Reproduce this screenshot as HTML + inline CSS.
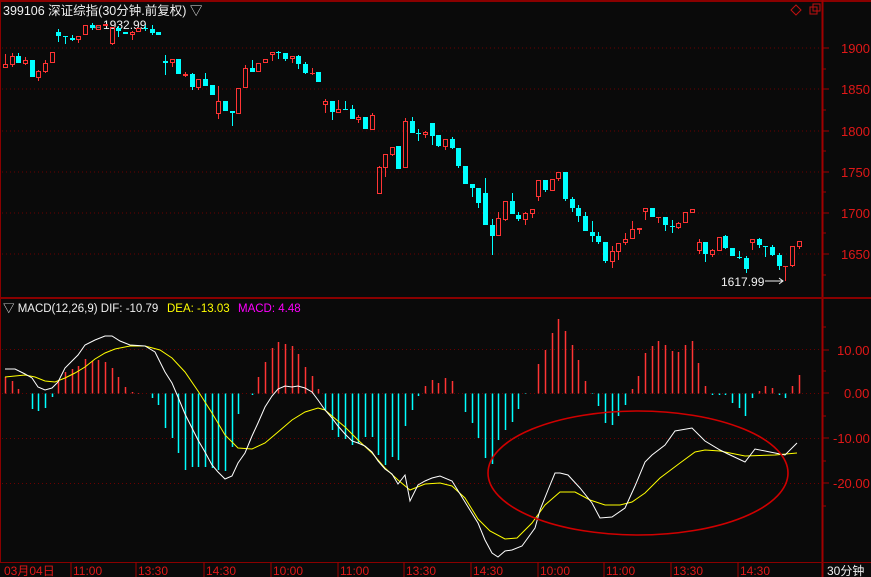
<!DOCTYPE html>
<html><head><meta charset="utf-8"><style>
html,body{margin:0;padding:0;background:#0a0a0a;width:871px;height:577px;overflow:hidden}
svg{display:block}
text{font-family:"Liberation Sans","Noto Sans CJK SC",sans-serif}
</style></head><body>
<svg id="s" width="871" height="577" viewBox="0 0 871 577" xmlns="http://www.w3.org/2000/svg">
<rect width="871" height="577" fill="#0a0a0a"/>
<line x1="0" y1="1" x2="871" y2="1" stroke="#8a0000" stroke-width="2"/>
<line x1="0.5" y1="0" x2="0.5" y2="562" stroke="#8a0000"/>
<line x1="822.5" y1="0" x2="822.5" y2="577" stroke="#a00000" stroke-width="2"/>
<line x1="0" y1="298" x2="871" y2="298" stroke="#8a0000" stroke-width="2"/>
<line x1="0" y1="562.5" x2="871" y2="562.5" stroke="#8a0000"/>
<g stroke="#6a0000" stroke-dasharray="1,3">
<line x1="2" y1="48" x2="822" y2="48"/><line x1="2" y1="89" x2="822" y2="89"/><line x1="2" y1="131" x2="822" y2="131"/><line x1="2" y1="172" x2="822" y2="172"/><line x1="2" y1="213" x2="822" y2="213"/><line x1="2" y1="254" x2="822" y2="254"/>
<line x1="2" y1="349.5" x2="822" y2="349.5"/><line x1="2" y1="393.5" x2="822" y2="393.5"/><line x1="2" y1="438.5" x2="822" y2="438.5"/><line x1="2" y1="483.5" x2="822" y2="483.5"/>
</g>
<g stroke="#a00000">
<line x1="822" y1="48" x2="829" y2="48"/><line x1="822" y1="89" x2="829" y2="89"/><line x1="822" y1="131" x2="829" y2="131"/><line x1="822" y1="172" x2="829" y2="172"/><line x1="822" y1="213" x2="829" y2="213"/><line x1="822" y1="254" x2="829" y2="254"/>
<line x1="822" y1="69" x2="826" y2="69"/><line x1="822" y1="110" x2="826" y2="110"/><line x1="822" y1="151" x2="826" y2="151"/><line x1="822" y1="192" x2="826" y2="192"/><line x1="822" y1="233" x2="826" y2="233"/><line x1="822" y1="275" x2="826" y2="275"/>
<line x1="822" y1="350" x2="829" y2="350"/><line x1="822" y1="393" x2="829" y2="393"/><line x1="822" y1="438" x2="829" y2="438"/><line x1="822" y1="483" x2="829" y2="483"/>
<line x1="822" y1="371" x2="826" y2="371"/><line x1="822" y1="416" x2="826" y2="416"/><line x1="822" y1="461" x2="826" y2="461"/><line x1="822" y1="506" x2="826" y2="506"/><line x1="822" y1="327" x2="826" y2="327"/>
</g>
<g fill="#e01818" font-size="13">
<text x="841" y="53">1900</text><text x="841" y="94">1850</text><text x="841" y="136">1800</text><text x="841" y="177">1750</text><text x="841" y="218">1700</text><text x="841" y="259">1650</text>
<text x="837" y="355">10.00</text><text x="844" y="398">0.00</text><text x="833" y="443">-10.00</text><text x="833" y="488">-20.00</text>
</g>
<g fill="none" stroke="#c01010">
<path d="M796 5 L801 10 L796 15 L791 10 Z"/>
<rect x="810" y="7" width="7" height="7"/><rect x="813" y="4" width="7" height="7"/>
</g>
<text x="3" y="15" fill="#f0f0f0" font-size="12.5">399106 深证综指(30分钟.前复权) ▽</text>
<text x="3" y="312" fill="#f0f0f0" font-size="11.5">▽ MACD(12,26,9)  DIF: -10.79</text>
<text x="167" y="312" fill="#ffff00" font-size="11.5">DEA: -13.03</text>
<text x="238" y="312" fill="#ff00ff" font-size="11.5">MACD: 4.48</text>
<text x="91" y="29" fill="#f0f0f0" font-size="12">←1932.99</text>
<text x="721" y="286" fill="#f0f0f0" font-size="12">1617.99</text>
<path d="M765 281 H783 M779 278 L783 281 L779 284" stroke="#f0f0f0" fill="none"/>
<g id="cand"></g>
<g id="hist"></g>
<g id="lines"></g>
<ellipse cx="638" cy="473" rx="150" ry="62" fill="none" stroke="#d00000" stroke-width="1.6"/>
<g stroke="#a00000">
<line x1="71" y1="562" x2="71" y2="577"/><line x1="136" y1="562" x2="136" y2="577"/><line x1="204" y1="562" x2="204" y2="577"/><line x1="271" y1="562" x2="271" y2="577"/><line x1="338" y1="562" x2="338" y2="577"/><line x1="404" y1="562" x2="404" y2="577"/><line x1="471" y1="562" x2="471" y2="577"/><line x1="538" y1="562" x2="538" y2="577"/><line x1="604" y1="562" x2="604" y2="577"/><line x1="671" y1="562" x2="671" y2="577"/><line x1="738" y1="562" x2="738" y2="577"/>
</g>
<g fill="#e01818" font-size="12">
<text x="4" y="575">03月04日</text><text x="73" y="575">11:00</text><text x="138" y="575">13:30</text><text x="206" y="575">14:30</text><text x="273" y="575">10:00</text><text x="340" y="575">11:00</text><text x="406" y="575">13:30</text><text x="473" y="575">14:30</text><text x="540" y="575">10:00</text><text x="606" y="575">11:00</text><text x="673" y="575">13:30</text><text x="740" y="575">14:30</text>
</g>
<text x="827" y="575" fill="#f0f0f0" font-size="12">30分钟</text>
</svg>
<script>
var NS="http://www.w3.org/2000/svg";
function el(p,t,a){var e=document.createElementNS(NS,t);for(var k in a)e.setAttribute(k,a[k]);p.appendChild(e);return e;}
var C=[
"r 5 64 68 54 68","r 12 56 65 53 67","c 18 56 63 53 63","r 25 60 64 57 65","c 32 60 77","r 38 71 78 70 81","r 45 63 72 60 73","r 52 52 63",
"c 58 32 36 29 42","c 65 36 37 36 44","c 72 38 40 35 41","r 78 36 40 36 43","r 85 25 35","c 92 25 28 23 30","r 98 25 30","r 105 24 26","r 112 27 44 27 45","c 118 28 31 26 37","c 125 32 34","r 132 32 35 31 40","r 138 28 32","c 145 28 29 25 31","c 152 29 33 25 35","c 158 32 35",
"c 165 61 63 55 75","r 172 59 63 59 67","c 178 59 74","r 185 74 76 72 77","c 192 74 87 73 90","r 198 79 88 79 90","c 205 79 86 73 86","c 212 85 95","r 218 101 114 86 119","c 225 101 111","c 232 111 113 111 126","r 238 88 114","r 245 68 88 65 88","c 252 68 72 60 72","r 258 63 72","r 265 59 63","r 272 52 55 52 61","c 278 52 53 51 59","c 285 53 59 53 61","r 292 56 59 56 63","c 298 56 64 55 69","c 305 64 73 62 74","r 312 73 74 68 75","c 318 72 82",
"r 325 101 105 99 113","c 332 101 112 101 120","r 338 109 113 100 113","c 345 109 110 101 110","c 352 109 119 105 119","r 358 117 120 115 123","c 365 117 129","r 372 115 130 113 130",
"r 379 167 194 166 194","r 385 154 168 154 177","r 392 147 155 147 156","c 398 146 169","r 405 121 168 118 168","c 412 121 133 117 133","c 418 133 134 129 141","r 425 132 135 131 138","c 432 123 136 123 145","c 438 135 146 135 147","r 445 139 147 139 150","c 452 139 148 137 149","c 458 148 166 148 168","c 465 166 184","c 472 184 188 184 197","c 478 188 203 188 208","c 485 193 225 178 225","c 492 225 236 219 255","r 498 218 236 212 236","r 505 201 220 201 221","c 512 201 214 193 214","c 518 215 219 212 221","r 525 213 220 212 225","r 532 209 214 209 218","r 538 180 197 180 201","c 545 180 190 180 192","r 552 179 191","r 558 172 179 172 181","c 565 172 199 172 201","c 572 199 208 197 212","c 578 208 216 205 222","c 585 216 231 212 231","c 592 232 236 221 242","c 598 236 242 232 244","c 605 242 261 242 263","r 612 251 262 246 268","r 618 243 252 243 260","r 625 239 243 233 245","r 632 229 239 221 239","r 639 228 230 228 234","r 645 208 212 208 220","c 652 208 217","r 658 217 218 217 223","c 665 217 225 217 231","c 672 226 227 220 233","r 678 223 228 222 229","r 685 212 223 212 223","r 692 209 213","r 699 242 251 239 254","c 705 242 254 242 262","r 712 250 255 249 257","r 719 237 251","c 725 236 248 235 249","c 732 248 256","c 739 257 258 251 259","c 746 258 269 256 273","r 752 239 243 239 250","c 759 239 245 238 248","c 765 246 247 246 257","c 772 247 255 245 256","c 779 255 266 253 270","r 785 266 267 266 281","r 792 246 266 246 267","r 799 241 247 241 249"];
var g=document.getElementById("cand");
C.forEach(function(s){var p=s.split(" "),red=p[0]=="r",x=+p[1],bt=+p[2],bb=+p[3],wt=p[4]?+p[4]:bt,wb=p[5]?+p[5]:bb;
var col=red?"#ff3434":"#00ffff";
if(wt<bt)el(g,"line",{x1:x+.5,y1:wt,x2:x+.5,y2:bt,stroke:col});
if(wb>bb)el(g,"line",{x1:x+.5,y1:bb,x2:x+.5,y2:wb,stroke:col});
if(bb-bt<=1.5){el(g,"line",{x1:x-2,y1:bt+.5,x2:x+3,y2:bt+.5,stroke:col});}
else if(red)el(g,"rect",{x:x-1.5,y:bt+.5,width:4,height:bb-bt-1,fill:"none",stroke:col});
else el(g,"rect",{x:x-2,y:bt,width:5,height:bb-bt,fill:col});
});
var H=[[5,377],[12,381],[18,389],[32,409],[38,411],[45,408],[52,397],[58,380],[65,372],[72,369],[78,366],[85,359],[92,361],[98,360],[105,362],[112,368],[118,377],[125,387],[132,392],[138,393],[152,398],[158,405],[165,428],[172,438],[178,453],[185,470],[192,467],[198,467],[205,467],[212,468],[218,470],[225,471],[232,447],[238,414],[252,395],[258,377],[265,362],[272,348],[278,342],[285,344],[292,346],[298,354],[305,367],[312,376],[318,389],[325,410],[332,430],[338,437],[345,439],[352,445],[358,443],[365,437],[372,437],[378,455],[385,465],[392,457],[398,460],[405,426],[412,410],[418,396],[425,386],[432,380],[438,383],[445,378],[452,381],[465,412],[472,423],[478,438],[485,458],[492,464],[498,440],[505,430],[512,422],[518,409],[525,394],[538,364],[545,350],[552,333],[558,319],[565,331],[572,345],[578,360],[585,381],[592,394],[598,406],[605,423],[612,425],[618,416],[625,405],[632,389],[638,376],[645,353],[652,346],[658,341],[665,345],[672,351],[678,352],[685,345],[692,341],[698,363],[705,386],[712,395],[719,395],[725,395],[732,403],[739,408],[745,416],[752,398],[759,391],[765,386],[772,388],[779,395],[785,398],[792,386],[799,375]];
var h=document.getElementById("hist");
H.forEach(function(b){var z=393.5;el(h,"line",{x1:b[0]+.5,y1:z,x2:b[0]+.5,y2:b[1],stroke:b[1]<z?"#ff3434":"#00ffff","stroke-width":1.5});});
var W="5,369 15,369 25,374 32,378 38,387 45,390 52,388 58,382 65,368 72,361 78,355 85,345 95,340 105,336 112,336 120,341 130,345 145,346 155,352 165,372 172,383 178,397 185,414 192,428 198,440 205,452 212,465 218,472 225,479 232,476 238,463 245,453 252,436 258,423 265,407 272,396 278,389 285,386 292,387 298,386 305,388 312,392 318,400 325,410 332,418 338,426 345,434 352,441 358,443 365,446 372,452 378,461 385,469 392,474 398,484 405,475 410,501 418,485 425,481 432,478 440,476 452,481 465,502 478,523 485,540 492,553 498,557 505,551 512,550 522,546 535,528 540,510 548,490 555,473 560,473 568,475 580,488 592,503 600,518 612,517 625,508 635,486 645,462 652,455 665,445 675,431 692,428 705,441 720,450 728,454 745,462 755,449 770,452 785,455 797,443";
var Y="5,377 15,376 25,375 35,377 45,381 55,382 65,378 75,373 85,367 95,359 105,353 115,349 130,346 145,346 160,350 172,358 185,372 198,391 212,413 225,435 238,448 252,449 265,443 278,432 292,420 305,412 318,408 325,410 332,416 345,427 358,440 372,453 385,468 398,480 410,490 425,484 440,483 452,486 465,498 478,519 490,531 505,539 517,538 532,523 545,505 560,492 575,492 590,500 605,505 620,505 632,502 645,493 660,478 680,463 695,452 705,450 720,451 745,456 775,455 797,453";
var L=document.getElementById("lines");
el(L,"polyline",{points:Y,fill:"none",stroke:"#ffff00","stroke-width":1});
el(L,"polyline",{points:W,fill:"none",stroke:"#ffffff","stroke-width":1});
</script>
</body></html>
